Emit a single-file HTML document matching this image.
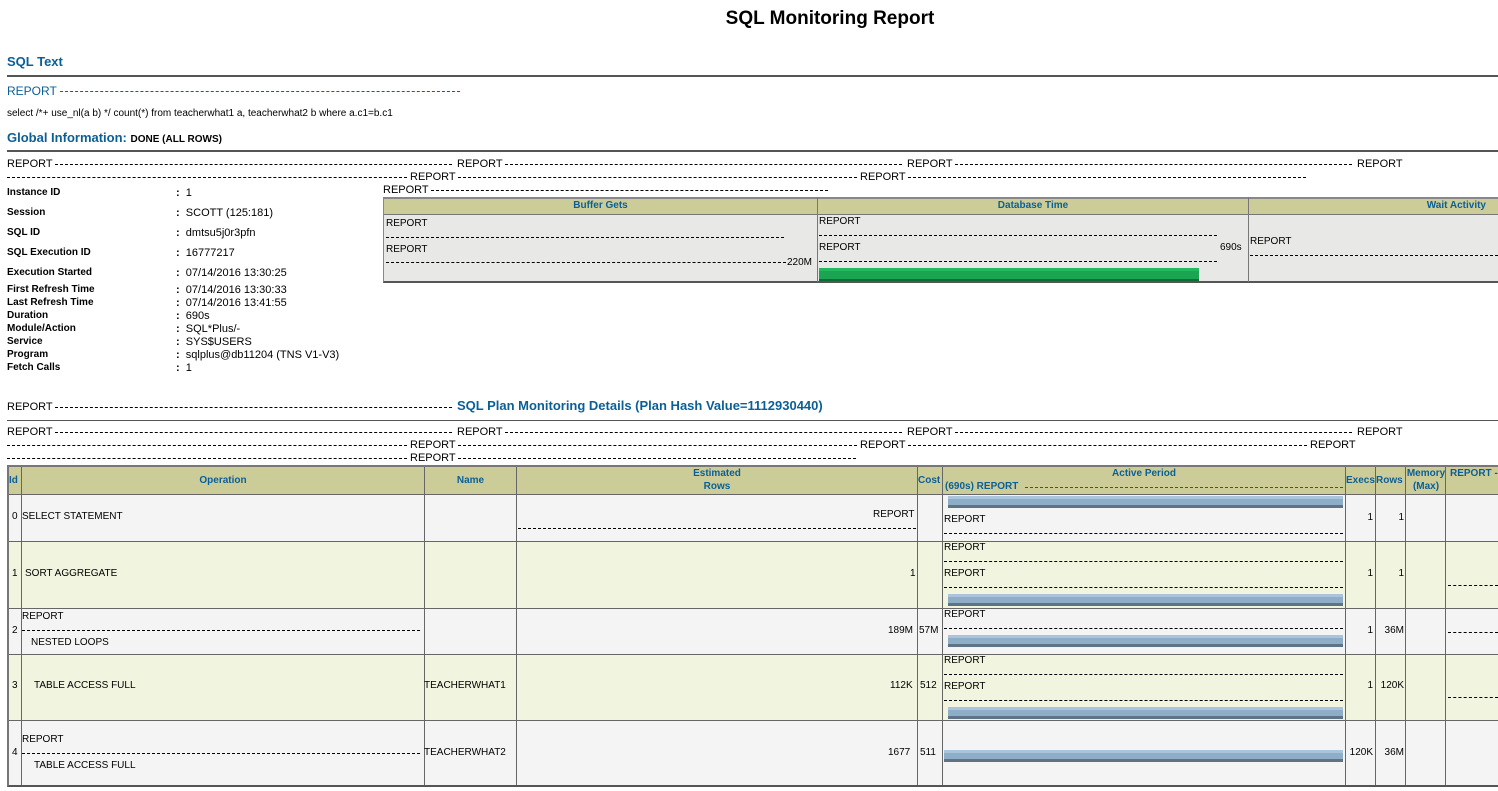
<!DOCTYPE html><html><head><meta charset="utf-8"><style>
body{margin:0;width:1498px;height:791px;overflow:hidden;background:#fff;font-family:"Liberation Sans",Tahoma,sans-serif;font-size:11px;color:#000;position:relative}
.a{position:absolute;line-height:14px;white-space:nowrap}
.d{position:absolute;height:0;border-top:1px dashed #000}
.b{font-weight:bold}
.bl{color:#0b5f97}
.h{position:absolute;background:#cccc99;color:#0b5f97;font-weight:bold;text-align:center;line-height:14px;box-sizing:border-box}
.bar{position:absolute;height:12px;background:#8eaec8;border-top:3px solid #a9c4db;border-bottom:3px solid #5e7486;box-sizing:border-box}
.l{position:absolute;left:7px;font-weight:bold;font-size:10px;line-height:14px;white-space:nowrap}
.v{position:absolute;left:176px;line-height:14px;white-space:nowrap}
.r{position:absolute;text-align:right;font-size:10px;line-height:14px;white-space:nowrap}
</style></head><body>
<div class="a b" style="left:0;width:1660px;text-align:center;top:8px;font-size:19px;line-height:22px">SQL Monitoring Report</div>
<div class="a b bl" style="left:7px;top:55px;font-size:13px">SQL Text</div>
<div style="position:absolute;left:7px;top:75px;width:1491px;height:0;border-top:2px solid #555"></div>
<div class="a bl" style="left:7px;top:84px;font-size:12px">REPORT</div><div class="d" style="left:60px;width:400px;top:91px;border-color:#0b5f97"></div>
<div class="a" style="left:7px;top:107px;font-size:10px">select /*+ use_nl(a b) */ count(*) from teacherwhat1 a, teacherwhat2 b where a.c1=b.c1</div>
<div class="a b bl" style="left:7px;top:131px;font-size:13px">Global Information: <span style="color:#000;font-size:10px">DONE (ALL ROWS)</span></div>
<div style="position:absolute;left:7px;top:150px;width:1491px;height:0;border-top:2px solid #555"></div>
<div class="a" style="left:7px;top:157px">REPORT</div><div class="d" style="left:55px;width:397px;top:164px"></div>
<div class="a" style="left:457px;top:157px">REPORT</div><div class="d" style="left:505px;width:397px;top:164px"></div>
<div class="a" style="left:907px;top:157px">REPORT</div><div class="d" style="left:955px;width:397px;top:164px"></div>
<div class="a" style="left:1357px;top:157px">REPORT</div>
<div class="d" style="left:7px;width:400px;top:177px"></div><div class="a" style="left:410px;top:170px">REPORT</div>
<div class="d" style="left:458px;width:399px;top:177px"></div><div class="a" style="left:860px;top:170px">REPORT</div>
<div class="d" style="left:908px;width:398px;top:177px"></div>
<div class="a" style="left:383px;top:183px">REPORT</div><div class="d" style="left:431px;width:397px;top:190px"></div>
<!-- global info -->
<div class="l" style="top:186px">Instance ID</div><div class="v" style="top:186px"><b>:</b>&nbsp; 1</div>
<div class="l" style="top:206px">Session</div><div class="v" style="top:206px"><b>:</b>&nbsp; SCOTT (125:181)</div>
<div class="l" style="top:226px">SQL ID</div><div class="v" style="top:226px"><b>:</b>&nbsp; dmtsu5j0r3pfn</div>
<div class="l" style="top:246px">SQL Execution ID</div><div class="v" style="top:246px"><b>:</b>&nbsp; 16777217</div>
<div class="l" style="top:266px">Execution Started</div><div class="v" style="top:266px"><b>:</b>&nbsp; 07/14/2016 13:30:25</div>
<div class="l" style="top:283px">First Refresh Time</div><div class="v" style="top:283px"><b>:</b>&nbsp; 07/14/2016 13:30:33</div>
<div class="l" style="top:296px">Last Refresh Time</div><div class="v" style="top:296px"><b>:</b>&nbsp; 07/14/2016 13:41:55</div>
<div class="l" style="top:309px">Duration</div><div class="v" style="top:309px"><b>:</b>&nbsp; 690s</div>
<div class="l" style="top:322px">Module/Action</div><div class="v" style="top:322px"><b>:</b>&nbsp; SQL*Plus/-</div>
<div class="l" style="top:335px">Service</div><div class="v" style="top:335px"><b>:</b>&nbsp; SYS$USERS</div>
<div class="l" style="top:348px">Program</div><div class="v" style="top:348px"><b>:</b>&nbsp; sqlplus@db11204 (TNS V1-V3)</div>
<div class="l" style="top:361px">Fetch Calls</div><div class="v" style="top:361px"><b>:</b>&nbsp; 1</div>
<!-- metrics table -->
<div style="position:absolute;left:383px;top:197px;width:1115px;height:86px;background:#e8e8e6;border-top:2px solid #888;border-left:1px solid #888;border-bottom:2px solid #555;box-sizing:border-box"></div>
<div class="h" style="left:384px;top:199px;width:433px;height:15px;font-size:10px">Buffer Gets</div>
<div class="h" style="left:818px;top:199px;width:430px;height:15px;font-size:10px">Database Time</div>
<div class="h" style="left:1249px;top:199px;width:249px;height:15px;font-size:10px;text-align:right;padding-right:12px">Wait Activity</div>
<div style="position:absolute;left:817px;top:197px;width:1px;height:85px;background:#777"></div>
<div style="position:absolute;left:1248px;top:197px;width:1px;height:85px;background:#777"></div>
<div style="position:absolute;left:384px;top:214px;width:1114px;height:1px;background:#777"></div>
<div class="a" style="left:386px;top:217px;font-size:10px">REPORT</div><div class="d" style="left:386px;width:398px;top:237px"></div>
<div class="a" style="left:386px;top:243px;font-size:10px">REPORT</div><div class="d" style="left:386px;width:400px;top:262px"></div><div class="a" style="left:787px;top:256px;font-size:10px">220M</div>
<div class="a" style="left:819px;top:215px;font-size:10px">REPORT</div><div class="d" style="left:819px;width:398px;top:235px"></div>
<div class="a" style="left:819px;top:241px;font-size:10px">REPORT</div><div class="a" style="left:1220px;top:241px;font-size:10px">690s</div><div class="d" style="left:819px;width:398px;top:261px"></div>
<div style="position:absolute;left:819px;top:268px;width:380px;height:13px;background:#1ba552;border-top:3px solid #22b85e;border-bottom:2px solid #116a34;box-sizing:border-box"></div>
<div class="a" style="left:1250px;top:235px;font-size:10px">REPORT</div><div class="d" style="left:1250px;width:248px;top:255px"></div>
<!-- plan heading -->
<div class="a" style="left:7px;top:400px">REPORT</div><div class="d" style="left:55px;width:397px;top:407px"></div>
<div class="a b bl" style="left:457px;top:399px;font-size:13px">SQL Plan Monitoring Details (Plan Hash Value=1112930440)</div>
<div style="position:absolute;left:7px;top:420px;width:1491px;height:0;border-top:1px solid #555"></div>
<div class="a" style="left:7px;top:425px">REPORT</div><div class="d" style="left:55px;width:397px;top:432px"></div>
<div class="a" style="left:457px;top:425px">REPORT</div><div class="d" style="left:505px;width:397px;top:432px"></div>
<div class="a" style="left:907px;top:425px">REPORT</div><div class="d" style="left:955px;width:397px;top:432px"></div>
<div class="a" style="left:1357px;top:425px">REPORT</div>
<div class="d" style="left:7px;width:400px;top:445px"></div><div class="a" style="left:410px;top:438px">REPORT</div>
<div class="d" style="left:458px;width:399px;top:445px"></div><div class="a" style="left:860px;top:438px">REPORT</div>
<div class="d" style="left:908px;width:399px;top:445px"></div><div class="a" style="left:1310px;top:438px">REPORT</div>
<div class="d" style="left:7px;width:400px;top:458px"></div><div class="a" style="left:410px;top:451px">REPORT</div><div class="d" style="left:458px;width:398px;top:458px"></div>
<!-- plan table -->
<div style="position:absolute;left:7px;top:465px;width:1491px;height:322px;background:#f4f4f4;border-top:2px solid #777;border-left:2px solid #777;border-bottom:2px solid #555;box-sizing:border-box"></div>
<div style="position:absolute;left:9px;top:467px;width:1489px;height:27px;background:#cccc99"></div>
<div style="position:absolute;left:9px;top:542px;width:1489px;height:66px;background:#f1f4de"></div>
<div style="position:absolute;left:9px;top:655px;width:1489px;height:65px;background:#f1f4de"></div>
<div style="position:absolute;top:467px;height:318px;left:21px;width:1px;background:#666"></div>
<div style="position:absolute;top:467px;height:318px;left:424px;width:1px;background:#666"></div>
<div style="position:absolute;top:467px;height:318px;left:516px;width:1px;background:#666"></div>
<div style="position:absolute;top:467px;height:318px;left:917px;width:1px;background:#666"></div>
<div style="position:absolute;top:467px;height:318px;left:942px;width:1px;background:#666"></div>
<div style="position:absolute;top:467px;height:318px;left:1345px;width:1px;background:#666"></div>
<div style="position:absolute;top:467px;height:318px;left:1375px;width:1px;background:#666"></div>
<div style="position:absolute;top:467px;height:318px;left:1405px;width:1px;background:#666"></div>
<div style="position:absolute;top:467px;height:318px;left:1445px;width:1px;background:#666"></div>
<div style="position:absolute;left:9px;width:1489px;height:1px;top:494px;background:#666"></div>
<div style="position:absolute;left:9px;width:1489px;height:1px;top:541px;background:#666"></div>
<div style="position:absolute;left:9px;width:1489px;height:1px;top:608px;background:#666"></div>
<div style="position:absolute;left:9px;width:1489px;height:1px;top:654px;background:#666"></div>
<div style="position:absolute;left:9px;width:1489px;height:1px;top:720px;background:#666"></div>
<div class="a b bl" style="left:9px;top:474px;font-size:10px">Id</div>
<div class="a b bl" style="left:22px;width:402px;text-align:center;top:474px;font-size:10px">Operation</div>
<div class="a b bl" style="left:425px;width:91px;text-align:center;top:474px;font-size:10px">Name</div>
<div class="a b bl" style="left:517px;width:400px;text-align:center;top:467px;font-size:10px;line-height:13px">Estimated<br>Rows</div>
<div class="a b bl" style="left:918px;top:474px;font-size:10px">Cost</div>
<div class="a b bl" style="left:943px;width:402px;text-align:center;top:467px;font-size:10px;line-height:13px">Active Period</div>
<div class="a b bl" style="left:945px;top:480px;font-size:10px;line-height:13px">(690s) REPORT</div><div class="d" style="left:1025px;width:318px;top:487px;border-color:#0b5f97"></div>
<div class="a b bl" style="left:1346px;top:474px;font-size:10px">Execs</div>
<div class="a b bl" style="left:1376px;top:474px;font-size:10px">Rows</div>
<div class="a b bl" style="left:1406px;width:40px;text-align:center;top:467px;font-size:10px;line-height:13px">Memory<br>(Max)</div>
<div class="a b bl" style="left:1450px;top:467px;font-size:10px;line-height:13px">REPORT -</div>
<!-- row 0 -->
<div class="a" style="left:12px;top:510px;font-size:10px">0</div>
<div class="a" style="left:22px;top:510px;font-size:10px">SELECT STATEMENT</div>
<div class="a" style="left:873px;top:508px;font-size:10px">REPORT</div><div class="d" style="left:518px;width:398px;top:528px"></div>
<div class="bar" style="left:948px;top:496px;width:395px"></div>
<div class="a" style="left:944px;top:513px;font-size:10px">REPORT</div><div class="d" style="left:944px;width:399px;top:533px"></div>
<div class="r" style="left:1346px;width:27px;top:511px">1</div><div class="r" style="left:1376px;width:28px;top:511px">1</div>
<!-- row 1 -->
<div class="a" style="left:12px;top:567px;font-size:10px">1</div>
<div class="a" style="left:25px;top:567px;font-size:10px">SORT AGGREGATE</div>
<div class="a" style="left:910px;top:567px;font-size:10px">1</div>
<div class="a" style="left:944px;top:541px;font-size:10px">REPORT</div><div class="d" style="left:944px;width:399px;top:561px"></div>
<div class="a" style="left:944px;top:567px;font-size:10px">REPORT</div><div class="d" style="left:944px;width:399px;top:587px"></div>
<div class="bar" style="left:948px;top:594px;width:395px"></div>
<div class="r" style="left:1346px;width:27px;top:567px">1</div><div class="r" style="left:1376px;width:28px;top:567px">1</div>
<div class="d" style="left:1448px;width:50px;top:585px"></div>
<!-- row 2 -->
<div class="a" style="left:12px;top:624px;font-size:10px">2</div>
<div class="a" style="left:22px;top:610px;font-size:10px">REPORT</div><div class="d" style="left:22px;width:398px;top:630px"></div>
<div class="a" style="left:31px;top:636px;font-size:10px">NESTED LOOPS</div>
<div class="a" style="left:888px;top:624px;font-size:10px">189M</div><div class="a" style="left:919px;top:624px;font-size:10px">57M</div>
<div class="a" style="left:944px;top:608px;font-size:10px">REPORT</div><div class="d" style="left:944px;width:399px;top:628px"></div>
<div class="bar" style="left:948px;top:635px;width:395px"></div>
<div class="r" style="left:1346px;width:27px;top:624px">1</div><div class="r" style="left:1376px;width:28px;top:624px">36M</div>
<div class="d" style="left:1448px;width:50px;top:632px"></div>
<!-- row 3 -->
<div class="a" style="left:12px;top:679px;font-size:10px">3</div>
<div class="a" style="left:34px;top:679px;font-size:10px">TABLE ACCESS FULL</div>
<div class="a" style="left:424px;top:679px;font-size:10px">TEACHERWHAT1</div>
<div class="a" style="left:890px;top:679px;font-size:10px">112K</div><div class="a" style="left:920px;top:679px;font-size:10px">512</div>
<div class="a" style="left:944px;top:654px;font-size:10px">REPORT</div><div class="d" style="left:944px;width:399px;top:674px"></div>
<div class="a" style="left:944px;top:680px;font-size:10px">REPORT</div><div class="d" style="left:944px;width:399px;top:700px"></div>
<div class="bar" style="left:948px;top:707px;width:395px"></div>
<div class="r" style="left:1346px;width:27px;top:679px">1</div><div class="r" style="left:1376px;width:28px;top:679px">120K</div>
<div class="d" style="left:1448px;width:50px;top:697px"></div>
<!-- row 4 -->
<div class="a" style="left:12px;top:746px;font-size:10px">4</div>
<div class="a" style="left:22px;top:733px;font-size:10px">REPORT</div><div class="d" style="left:22px;width:398px;top:753px"></div>
<div class="a" style="left:34px;top:759px;font-size:10px">TABLE ACCESS FULL</div>
<div class="a" style="left:424px;top:746px;font-size:10px">TEACHERWHAT2</div>
<div class="a" style="left:888px;top:746px;font-size:10px">1677</div><div class="a" style="left:920px;top:746px;font-size:10px">511</div>
<div class="bar" style="left:944px;top:750px;width:399px"></div>
<div class="r" style="left:1346px;width:27px;top:746px">120K</div><div class="r" style="left:1376px;width:28px;top:746px">36M</div>
</body></html>
